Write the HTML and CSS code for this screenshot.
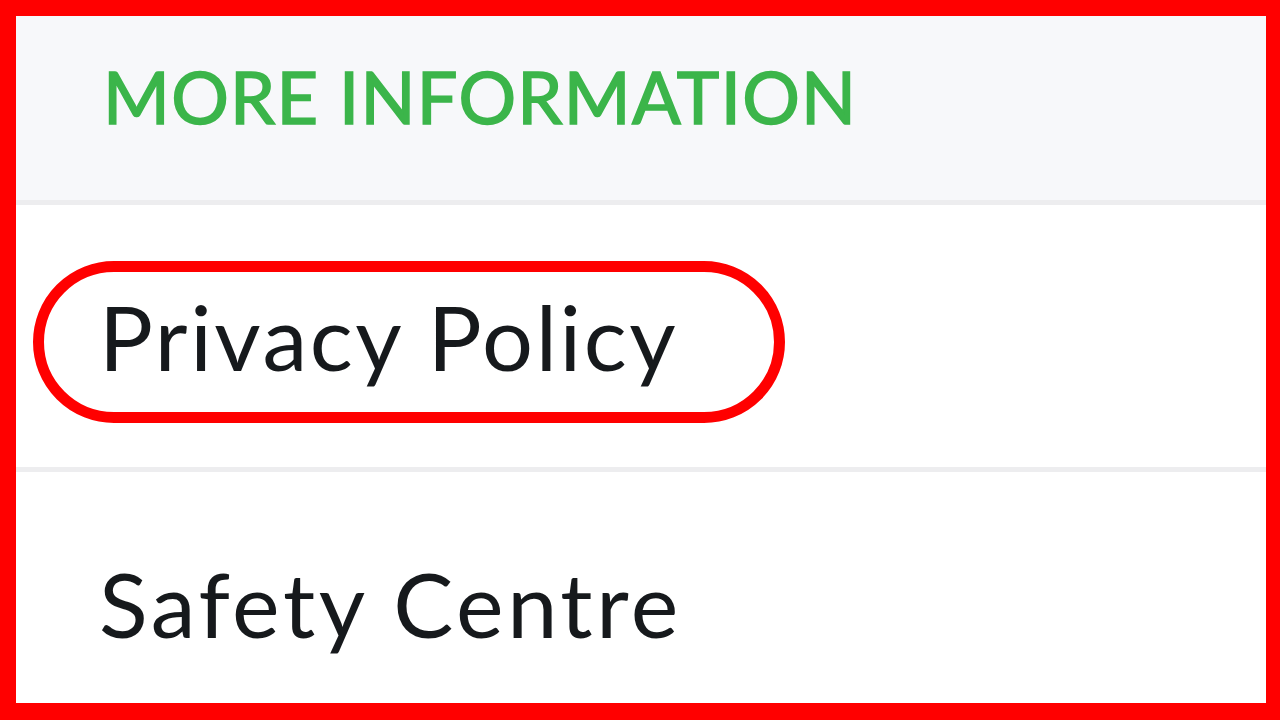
FILE: index.html
```html
<!DOCTYPE html>
<html lang="en">
<head>
<meta charset="utf-8">
<title>More Information</title>
<link rel="stylesheet" href="styles.css">
</head>
<body>
<div class="frame">
  <div class="section-header">
    <span class="section-title">MORE INFORMATION</span>
  </div>
  <div class="row row-highlight">
    <span class="row-label">Privacy Policy</span>
    <span class="highlight-ring"></span>
  </div>
  <div class="row">
    <span class="row-label label-wide">Safety Centre</span>
  </div>
</div>
</body>
</html>
```

FILE: styles.css
```css
html, body {
  margin: 0;
  padding: 0;
  background: #ff0000;
}

.frame {
  box-sizing: border-box;
  width: 1280px;
  height: 720px;
  border-style: solid;
  border-color: #ff0000;
  border-width: 16px 14px 17px 16px;
  background: #ffffff;
  overflow: hidden;
  display: flex;
  flex-direction: column;
  font-family: "Lato", "Noto Sans", sans-serif;
}

.section-header {
  flex: 0 0 auto;
  height: 189px;
  box-sizing: border-box;
  background: #f7f8fa;
  border-bottom: 5px solid #ededef;
  display: flex;
  align-items: center;
  padding-left: 87px;
  padding-bottom: 24px;
}

.section-title {
  color: #3bb54a;
  font-size: 72px;
  font-weight: 400;
  line-height: 1;
  letter-spacing: 1.3px;
  -webkit-text-stroke: 1.6px #3bb54a;
}

.row {
  flex: 0 0 auto;
  position: relative;
  height: 267px;
  box-sizing: border-box;
  border-bottom: 5px solid #ededef;
  display: flex;
  align-items: center;
  padding-left: 83px;
}

.row-label {
  color: #16191c;
  font-size: 90px;
  line-height: 1;
  letter-spacing: 2.6px;
}

.label-wide {
  letter-spacing: 3.6px;
}

.highlight-ring {
  position: absolute;
  left: 17px;
  top: 56px;
  width: 752px;
  height: 162px;
  box-sizing: border-box;
  border: 11px solid #ff0000;
  border-radius: 81px;
}
```
